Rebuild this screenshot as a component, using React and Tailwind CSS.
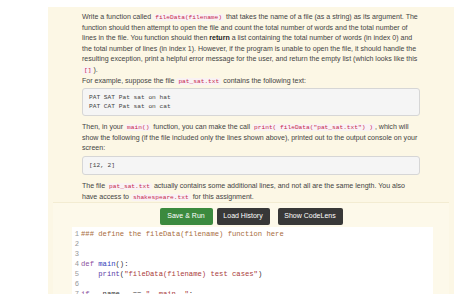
import React from "react";

const C = ({ children }) => (
  <code className="font-['Liberation_Mono',monospace] text-[6.2px] leading-none text-[#c7254e] bg-[#f9f2f4] px-[2px] rounded-[2px]">
    {children}
  </code>
);

const Line = ({ n, children }) => (
  <div className="flex h-[10px] leading-[10px]">
    <div className="w-[8px] text-right pr-[1px] text-[#999]">{n}</div>
    <div className="pl-[1px] whitespace-pre text-[#333]">{children}</div>
  </div>
);

const preCls =
  "mt-[2px] mb-[6px] bg-[#f5f5f5] border border-[#d6d6d6] rounded-[3px] px-[6px] py-[4px] font-['Liberation_Mono',monospace] text-[6.2px] leading-[9px] text-[#444]";

export default function App() {
  return (
    <div className="w-[474px] h-[294px] bg-white overflow-hidden font-['Liberation_Sans',Arial,sans-serif]">
      <div className="ml-[48px] mt-[7px] w-[406px] h-[287px] bg-[#fcf7e5] flex flex-col">
        <div className="px-[34px] pt-[5px] text-[7.05px] leading-[10.6px] text-[#444] whitespace-nowrap">
          <div className="h-[10.6px]">
            Write a function called <C>fileData(filename)</C> that takes the name of a file (as a string) as its argument. The
          </div>
          <div className="h-[10.6px]">function should then attempt to open the file and count the total number of words and the total number of</div>
          <div className="h-[10.6px]">
            lines in the file. You function should then <b className="text-[#222]">return</b> a list containing the total number of words (in index 0) and
          </div>
          <div className="h-[10.6px]">the total number of lines (in index 1). However, if the program is unable to open the file, it should handle the</div>
          <div className="h-[10.6px]">resulting exception, print a helpful error message for the user, and return the empty list (which looks like this</div>
          <div className="h-[10.6px]">
            <C>[]</C>).
          </div>
          <div className="h-[10.6px]">
            For example, suppose the file <C>pat_sat.txt</C> contains the following text:
          </div>
          <pre className={preCls}>{"PAT SAT Pat sat on hat\nPAT CAT Pat sat on cat"}</pre>
          <div className="h-[10.6px]">
            Then, in your <C>main()</C> function, you can make the call <C>print( fileData("pat_sat.txt") )</C>, which will
          </div>
          <div className="h-[10.6px]">show the following (if the file included only the lines shown above), printed out to the output console on your</div>
          <div className="h-[10.6px]">screen:</div>
          <pre className={preCls}>{"[12, 2]"}</pre>
          <div className="h-[10.6px]">
            The file <C>pat_sat.txt</C> actually contains some additional lines, and not all are the same length. You also
          </div>
          <div className="h-[10.6px]">
            have access to <C>shakespeare.txt</C> for this assignment.
          </div>
        </div>
        <div className="mx-[5px] flex-1 bg-[#fdf9ea] border-t border-[#f3ecd2] flex flex-col">
          <div className="mt-[5px] flex justify-center text-[7px] text-white">
            <div className="w-[53px] h-[17px] flex items-center justify-center bg-[#3b8a3e] rounded-[2px]">Save &amp; Run</div>
            <div className="ml-[4px] w-[53px] h-[17px] flex items-center justify-center bg-[#383838] rounded-[2px]">Load History</div>
            <div className="ml-[8px] w-[65px] h-[17px] flex items-center justify-center bg-[#383838] rounded-[2px]">Show CodeLens</div>
          </div>
          <div className="mt-[2px] ml-[19px] w-[361px] flex-1 bg-white pt-[2px] font-['Liberation_Mono',monospace] text-[7.2px]">
            <Line n="1">
              <span className="text-[#a86d3c]">### define the fileData(filename) function here</span>
            </Line>
            <Line n="2"></Line>
            <Line n="3"></Line>
            <Line n="4">
              <span className="text-[#8a4c9c]">def</span> <span className="text-[#3344bb]">main</span>():
            </Line>
            <Line n="5">
              {"    "}
              <span className="text-[#5a3aa6]">print</span>(<span className="text-[#aa3b3b]">"fileData(filename) test cases"</span>)
            </Line>
            <Line n="6"></Line>
            <Line n="7">
              <span className="text-[#8a4c9c]">if</span> __name__ == <span className="text-[#aa3b3b]">"__main__"</span>:
            </Line>
          </div>
        </div>
      </div>
    </div>
  );
}
